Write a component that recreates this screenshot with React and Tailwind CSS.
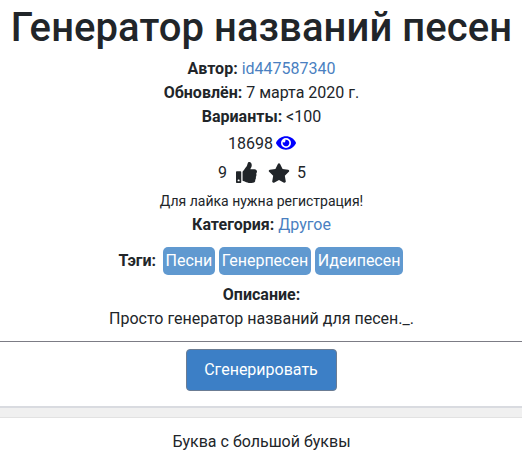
import React from 'react';
import { FaEye, FaThumbsUp, FaStar } from 'react-icons/fa';

const Tag = ({ children }) => (
  <a className="bg-[#6099d0] text-white rounded-[5px] px-[3px] h-[28px] leading-[27px] ml-[3.5px] first:ml-0">{children}</a>
);

const Row = ({ label, children }) => (
  <div className="h-[24px] leading-[24px]">
    <b className="font-bold">{label}</b> {children}
  </div>
);

export default function App() {
  return (
    <div className="h-[453px] overflow-hidden bg-white text-[#212529] text-center text-[16px] font-['Roboto',sans-serif]">
      <h1 className="text-[40px] leading-[48px] font-medium pt-[4px] h-[56px] whitespace-nowrap tracking-[0.08px] pl-[1px]">Генератор названий песен</h1>
      <div className="mt-[1px] pl-[1px]">
        <Row label="Автор:"><a className="text-[#4a7fc1]">id447587340</a></Row>
        <Row label="Обновлён:">7 марта 2020 г.</Row>
        <Row label="Варианты:">&lt;100</Row>
      </div>
      <div className="flex justify-center items-center h-[28px] mt-[1px] pl-[2px]">
        18698
        <FaEye className="text-[#0000ff] w-[20px] h-[18px] ml-[3px] -mt-[2px]" />
      </div>
      <div className="flex justify-center items-center h-[30px] mb-[1px] pl-[2px]">
        <span>9</span>
        <FaThumbsUp className="w-[21px] h-[21px] ml-[9px] -mt-[2px]" />
        <FaStar className="w-[22px] h-[20px] ml-[11px] -mt-[1px]" />
        <span className="ml-[7px]">5</span>
      </div>
      <div className="text-[14px] h-[24px] leading-[24px] pl-[1px]">Для лайка нужна регистрация!</div>
      <div className="pl-[1px]">
        <Row label="Категория:"><a className="text-[#4a7fc1]">Другое</a></Row>
      </div>
      <div className="flex justify-center items-center h-[28px] mt-[10px]">
        <b className="mr-[3px]">Тэги:</b>
        <Tag>Песни</Tag>
        <Tag>Генерпесен</Tag>
        <Tag>Идеипесен</Tag>
      </div>
      <div className="font-bold h-[24px] leading-[24px] mt-[8px] pl-[1px]">Описание:</div>
      <div className="h-[24px] leading-[24px] pl-[1px]">Просто генератор названий для песен._.</div>
      <hr className="border-0 border-t border-[#7c7c85] mt-[10px]" />
      <button className="block mx-auto mt-[7px] w-[151px] h-[42px] bg-[#3c7fc6] text-white rounded-[4px] border border-[#6b7c93]">Сгенерировать</button>
      <div className="h-[12px] mt-[15px] bg-[#f0f0f0] border-t-2 border-b border-t-[#d9dbe0] border-b-[#e2e2e2]" />
      <div className="mt-[12px] h-[24px] leading-[24px] pl-[1px]">Буква с большой буквы</div>
    </div>
  );
}
